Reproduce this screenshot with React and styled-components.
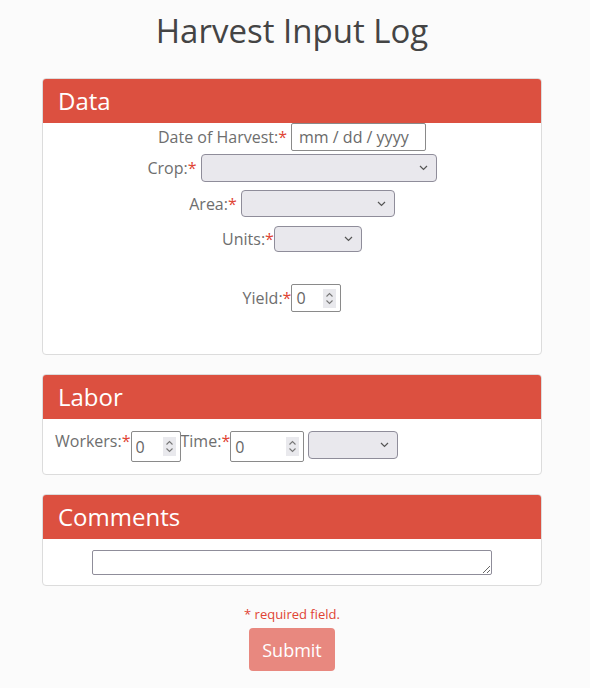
import React from 'react';
import { styled, createGlobalStyle } from 'styled-components';

const GlobalStyle = createGlobalStyle`
  html, body {
    margin: 0;
    padding: 0;
    background: #fbfbfb;
    font-family: "Open Sans", "Liberation Sans", sans-serif;
  }
`;

function Required() {
  return <Star>*</Star>;
}

function Card({ title, children, pad, align }) {
  return (
    <StyledCard>
      <CardHeader>{title}</CardHeader>
      <CardBody $pad={pad} $align={align}>
        {children}
      </CardBody>
    </StyledCard>
  );
}

function Dropdown({ w, h }) {
  return (
    <SelectWrap>
      <Select $w={w} $h={h} />
      <Chevron width="9" height="6" viewBox="0 0 9 6">
        <path d="M1 1l3.5 3.5L8 1" fill="none" stroke="#555" strokeWidth="1.2" />
      </Chevron>
    </SelectWrap>
  );
}

function NumberField({ w, h }) {
  return (
    <SelectWrap>
      <NumberInput type="number" defaultValue={0} $w={w} $h={h} />
      <Spinner>
        <svg width="13" height="19" viewBox="0 0 13 19">
          <path d="M3.5 7.5l3-3 3 3M3.5 11.5l3 3 3-3" fill="none" stroke="#777" strokeWidth="1.1" />
        </svg>
      </Spinner>
    </SelectWrap>
  );
}

export default function App() {
  return (
    <Page>
      <GlobalStyle />
      <Title>Harvest Input Log</Title>
      <Card title="Data" pad="0 0 42px" align="center">
        <Row $mt={0}>
          <Label>
            Date of Harvest:<Required />
          </Label>
          <Space />
          <DateInput type="text" placeholder="mm / dd / yyyy" />
        </Row>
        <Row $mt={3}>
          <Label>
            Crop:<Required />
          </Label>
          <Space />
          <Dropdown w={236} h={28} />
        </Row>
        <Row $mt={8}>
          <Label>
            Area:<Required />
          </Label>
          <Space />
          <Dropdown w={154} h={27} />
        </Row>
        <Row $mt={9}>
          <Label>
            Units:<Required />
          </Label>
          <Dropdown w={88} h={26} />
        </Row>
        <Row $mt={32}>
          <Label>
            Yield:<Required />
          </Label>
          <NumberField w={50} h={28} />
        </Row>
      </Card>

      <Card title="Labor" pad="12px 12px 12px" align="left">
        <LaborRow>
          <Label>
            Workers:<Required />
          </Label>
          <NumberField w={50} h={31} />
          <Label>
            Time:<Required />
          </Label>
          <NumberField w={74} h={31} />
          <Space />
          <Dropdown w={90} h={28} />
        </LaborRow>
      </Card>

      <Card title="Comments" pad="11px 0 10px" align="center">
        <Comments rows={1} />
      </Card>

      <Footer>
        <Note>* required field.</Note>
        <SubmitButton type="button" disabled>
          Submit
        </SubmitButton>
      </Footer>
    </Page>
  );
}

//
// STYLE

const Page = styled.div`
  width: 500px;
  margin: 0 0 0 42px;
  padding: 8px 0 16px;
  display: flex;
  flex-direction: column;
  align-items: stretch;
`;

const Title = styled.h1`
  margin: 0 0 25px;
  text-align: center;
  font-size: 33px;
  font-weight: 400;
  line-height: 45px;
  color: #444;
`;

const StyledCard = styled.section`
  background: #fff;
  border: 1px solid #dcdcdc;
  border-radius: 4px;
  overflow: hidden;
  margin-bottom: 19px;
`;

const CardHeader = styled.h2`
  margin: 0;
  height: 44px;
  padding: 0 15px;
  background: #dc5040;
  color: #fff;
  font-size: 24px;
  font-weight: 400;
  line-height: 43px;
`;

const CardBody = styled.div`
  padding: ${(p) => p.$pad};
  text-align: ${(p) => p.$align};
`;

const Row = styled.div`
  display: flex;
  justify-content: center;
  align-items: center;
  margin-top: ${(p) => p.$mt}px;
`;

const LaborRow = styled.div`
  display: flex;
  align-items: flex-start;
`;

const Space = styled.span`
  display: inline-block;
  width: 4px;
`;

const Label = styled.label`
  font-size: 16px;
  line-height: 20px;
  color: #6e6e6e;
  white-space: nowrap;
`;

const Star = styled.span`
  color: #e04434;
`;

const DateInput = styled.input`
  box-sizing: border-box;
  width: 135px;
  height: 28px;
  font-family: inherit;
  font-size: 16px;
  color: #666;
  border: 1px solid #8a8a8a;
  border-radius: 2px;
  padding: 0 7px;
  outline: none;

  &::placeholder {
    color: #6a6a6a;
    opacity: 1;
  }
`;

const SelectWrap = styled.span`
  position: relative;
  display: inline-flex;
`;

const Select = styled.select`
  box-sizing: border-box;
  appearance: none;
  width: ${(p) => p.$w}px;
  height: ${(p) => p.$h}px;
  font-family: inherit;
  font-size: 14px;
  background-color: #e9e8ed;
  border: 1px solid #8f8d9a;
  border-radius: 4px;
  outline: none;
`;

const Chevron = styled.svg`
  position: absolute;
  right: 9px;
  top: 50%;
  margin-top: -3px;
  pointer-events: none;
`;

const NumberInput = styled.input`
  box-sizing: border-box;
  width: ${(p) => p.$w}px;
  height: ${(p) => p.$h}px;
  font-family: inherit;
  font-size: 16px;
  color: #666;
  border: 1px solid #8a8a8a;
  border-radius: 2px;
  padding: 0 2px 0 4px;
  outline: none;
  -moz-appearance: textfield;

  &::-webkit-inner-spin-button,
  &::-webkit-outer-spin-button {
    -webkit-appearance: none;
    margin: 0;
  }
`;

const Spinner = styled.span`
  position: absolute;
  right: 5px;
  top: 50%;
  margin-top: -9.5px;
  width: 13px;
  height: 19px;
  background: #e9e9ed;
  display: flex;
  pointer-events: none;
`;

const Comments = styled.textarea`
  box-sizing: border-box;
  display: block;
  margin: 0 auto;
  width: 400px;
  height: 25px;
  border: 1px solid #8f8d9a;
  border-radius: 2px;
  font-family: inherit;
  resize: both;
  outline: none;
`;

const Footer = styled.div`
  display: flex;
  flex-direction: column;
  align-items: center;
`;

const Note = styled.p`
  margin: 0 0 5px;
  font-size: 13px;
  line-height: 18px;
  color: #e04434;
`;

const SubmitButton = styled.button`
  width: 86px;
  height: 43px;
  border: none;
  border-radius: 4px;
  background: #e8887f;
  color: #fff;
  font-family: inherit;
  font-size: 18px;
  cursor: default;
`;
